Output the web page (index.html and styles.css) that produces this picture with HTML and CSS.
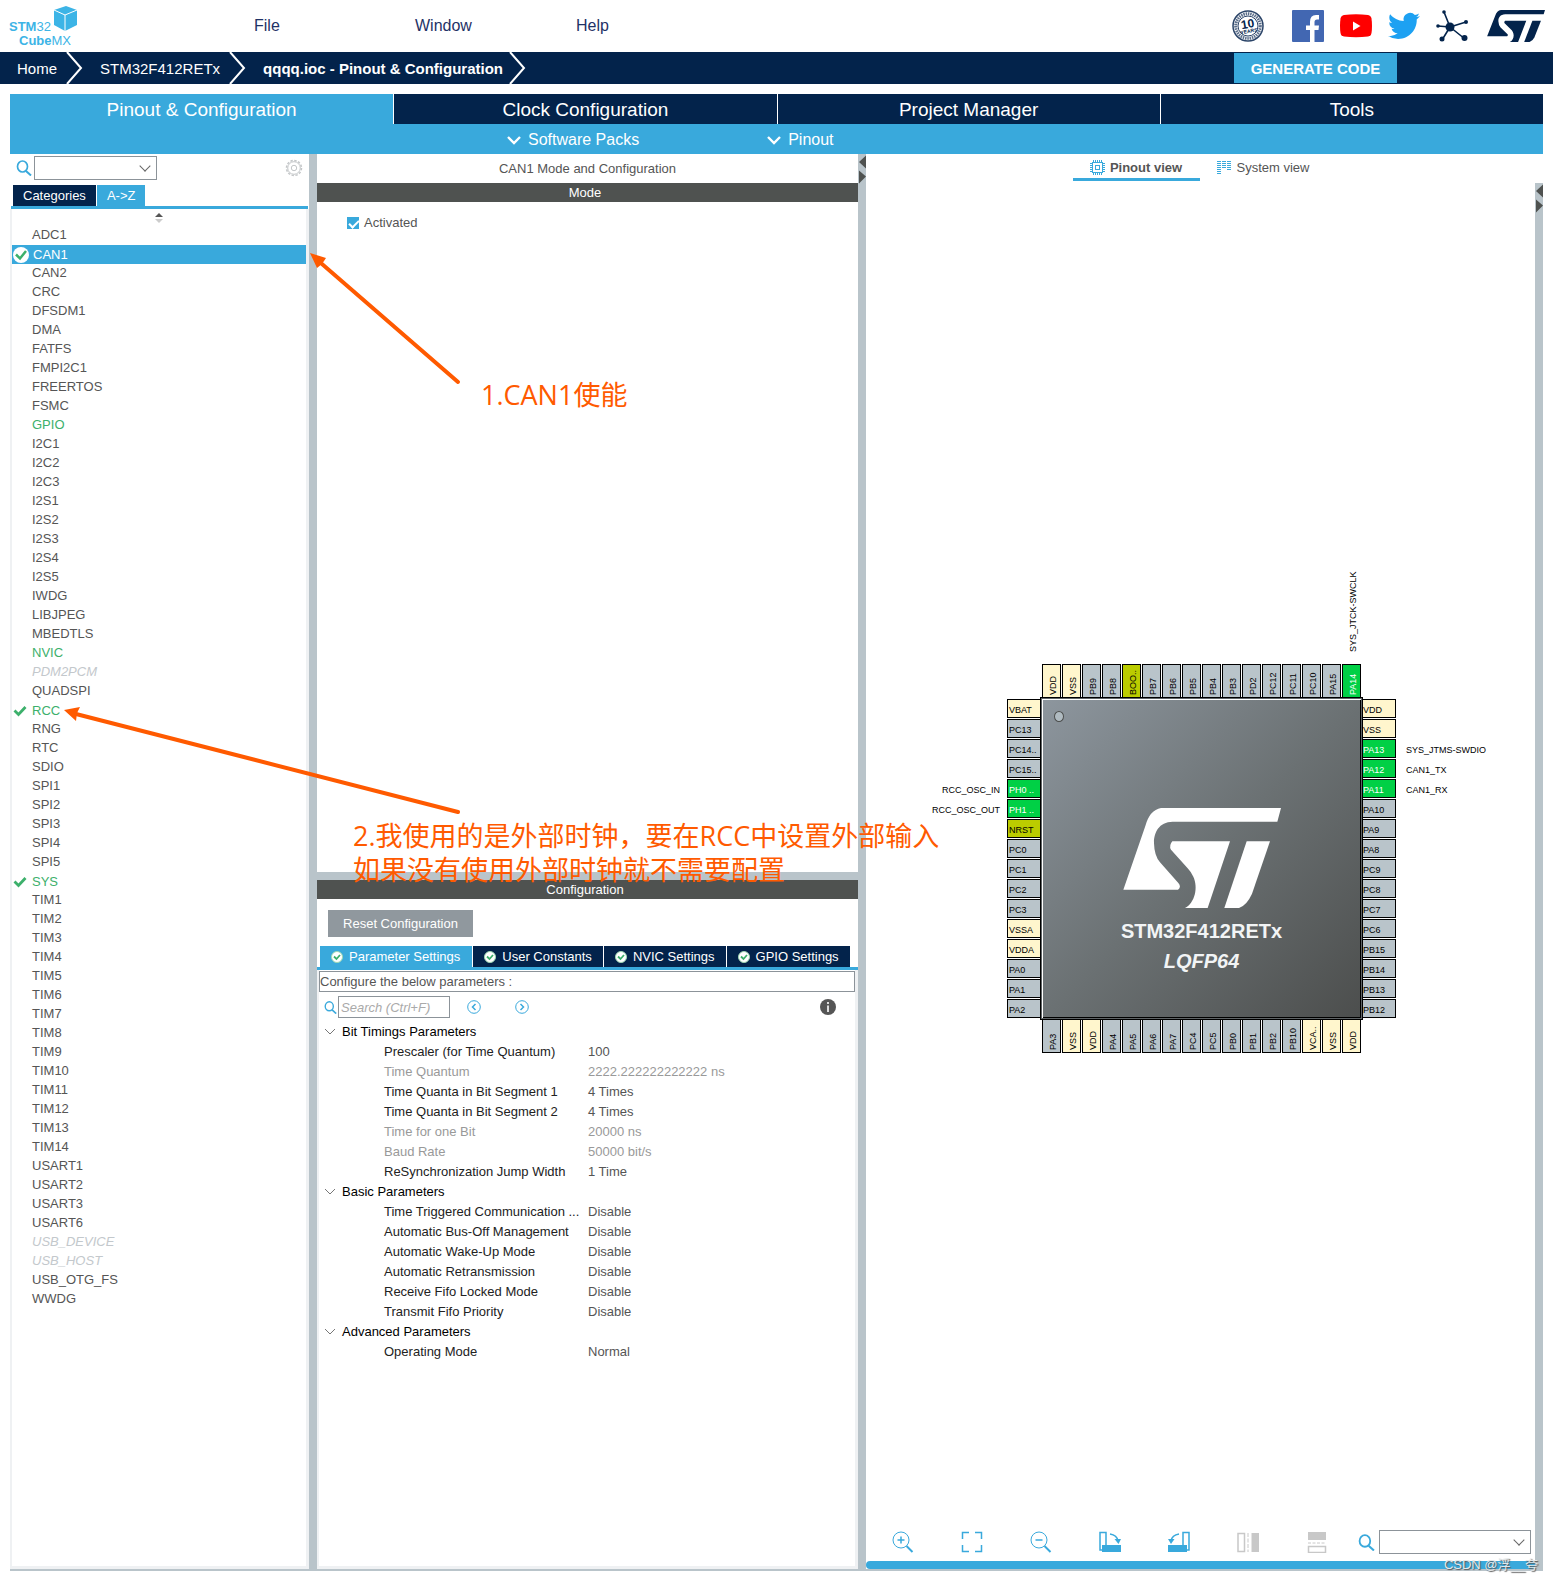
FILE: index.html
```html
<!DOCTYPE html>
<html lang="en">
<head>
    <meta charset="UTF-8">
    <title>STM32CubeMX</title>
    <link rel="stylesheet" href="styles.css">
</head>
<body>
<!-- shared icons -->
<svg class="sprite" aria-hidden="true">
    <symbol id="st" viewBox="636 84 474 300" preserveAspectRatio="none">
        <path d="M637 329 703 138Q716 90 750 84H1110L1099 125H785C742 126 728 160 729 190Q730 228 747 247L802 309Q812 321 801 329Z"/>
        <path d="M784 184H957L890 384H822C852 368 862 322 847 290Q842 278 830 265L780 209Q773 197 784 184Z"/>
        <path d="M1007 184H1077L1023 341Q1008 375 984 384H940Z"/>
    </symbol>
    <symbol id="search" viewBox="0 0 16 16">
        <ellipse cx="6.500" cy="6.500" rx="5" ry="5.500" fill="none" stroke="currentColor" stroke-width="1.700"/>
        <path d="M10 11 15 15.500" stroke="currentColor" stroke-width="2"/>
    </symbol>
    <symbol id="check" viewBox="0 0 14 12">
        <path d="M1.500 5.500 5.500 9.500 12.500 2" fill="none" stroke="#3cb06b" stroke-width="2.800"/>
    </symbol>
    <symbol id="ok" viewBox="0 0 12 12">
        <circle cx="6" cy="6" r="5.500" fill="#fff" stroke="#9ed8b2"/>
        <path d="M3 5.500 5.500 8 9 4" fill="none" stroke="#3cb06b" stroke-width="1.800"/>
    </symbol>
    <symbol id="down" viewBox="0 0 14 10">
        <path d="M1 2 7 8 13 2" fill="none" stroke="currentColor" stroke-width="2.400"/>
    </symbol>
    <symbol id="twisty" viewBox="0 0 12 8">
        <path d="M1 1 6 6 11 1" fill="none" stroke="#777"/>
    </symbol>
    <symbol id="crumb" viewBox="0 0 17 32">
        <path d="M1 0 15 16 1 32" fill="none" stroke="#fff" stroke-width="2"/>
    </symbol>
    <symbol id="handle" viewBox="0 0 8 29">
        <path d="M8 1V14L1 7.500ZM1 16V29L8 22Z" fill="#4f5250"/>
    </symbol>
</svg>

<header class="header">
    <svg class="logo" viewBox="0 0 72 44">
        <text x="0" y="27" class="logo-text"><tspan font-weight="bold">STM</tspan>32</text>
        <text x="10" y="41" class="logo-text"><tspan font-weight="bold">Cube</tspan>MX</text>
        <path d="M45 6 57 2 68 6V21L56 27 45 21Z" fill="#3cb4e6"/>
        <path d="M45 6 56 11 68 6M56 11V27" fill="none" stroke="#fff"/>
    </svg>
    <nav class="menu">
        <button>File</button>
        <button>Window</button>
        <button>Help</button>
    </nav>
    <div class="links">
        <a href="#" class="badge" aria-label="10 years commitment">
            <svg width="32" height="32" viewBox="0 0 32 32">
                <circle cx="16" cy="16" r="15" fill="#fff" stroke="#2b4468" stroke-width="1.500"/>
                <circle cx="16" cy="16" r="12.300" fill="none" stroke="#5b6e8a" stroke-width="3" stroke-dasharray="1.500 .8"/>
                <circle cx="16" cy="16" r="10" fill="#fff" stroke="#2b4468"/>
                <g fill="#03234b" font-weight="bold" text-anchor="middle" transform="rotate(-10 16 16)">
                    <text x="16" y="18" font-size="12">10</text>
                    <text x="16" y="23" font-size="5">YEARS</text>
                </g>
            </svg>
        </a>
        <a href="#" aria-label="Facebook">
            <svg width="32" height="32" viewBox="0 0 32 32">
                <rect width="32" height="32" rx="1" fill="#4267b2"/>
                <path d="M22 32V20H18V15.500H22V12Q22 5 28 5H31V9.500H29Q26.500 9.500 26.500 12V15.500H31L30.500 20H26.500V32Z" fill="#fff" transform="translate(-4 0)"/>
            </svg>
        </a>
        <a href="#" aria-label="YouTube">
            <svg width="32" height="32" viewBox="0 0 32 32">
                <path d="M4 5Q16 3.500 28 5 31 5.500 31.500 8.500 32.500 16 31.500 23 31 26 28 26.500 16 28 4 26.500 1 26 .5 23-.5 16 .5 8.500 1 5.500 4 5Z" fill="#f00"/>
                <path d="M13 11.500V20.500L20.500 16Z" fill="#fff"/>
            </svg>
        </a>
        <a href="#" aria-label="Twitter">
            <svg width="32" height="32" viewBox="0 0 24 24">
                <path fill="#1da1f2" d="M23.950 4.570a10 10 0 0 1-2.820.770 4.960 4.960 0 0 0 2.160-2.720c-.95.550-2 .950-3.130 1.180a4.920 4.920 0 0 0-8.380 4.480C7.690 8.090 4.070 6.130 1.640 3.160a4.820 4.820 0 0 0-.67 2.480c0 1.710.87 3.210 2.190 4.100a4.900 4.900 0 0 1-2.230-.62v.060a4.920 4.920 0 0 0 3.950 4.830 5 5 0 0 1-2.210.080 4.940 4.940 0 0 0 4.600 3.420A9.870 9.870 0 0 1 0 19.540a13.990 13.990 0 0 0 7.550 2.210c9.050 0 14-7.500 14-13.980 0-.21 0-.42-.02-.63a9.940 9.940 0 0 0 2.460-2.550z"/>
            </svg>
        </a>
        <a href="#" aria-label="Community">
            <svg width="32" height="32" viewBox="0 0 32 32" fill="#03234b">
                <path d="M14 17 8 2M14 17 2 16M14 17 30 12M14 17 6 30M14 17 29 29" stroke="#03234b" stroke-width="1.600"/>
                <circle cx="14" cy="17" r="4.500"/><circle cx="8" cy="2" r="1.800"/><circle cx="2" cy="16" r="1.800"/>
                <circle cx="30" cy="12" r="2"/><circle cx="6" cy="29" r="2.500"/><circle cx="28.500" cy="28" r="3"/>
            </svg>
        </a>
        <a href="#" aria-label="ST"><svg class="st-link"><use href="#st"/></svg></a>
    </div>
</header>

<nav class="breadcrumb">
    <a href="#">Home</a><svg class="crumb"><use href="#crumb"/></svg>
    <a href="#">STM32F412RETx</a><svg class="crumb"><use href="#crumb"/></svg>
    <a href="#" class="current">qqqq.ioc - Pinout &amp; Configuration</a><svg class="crumb"><use href="#crumb"/></svg>
    <button class="generate">GENERATE CODE</button>
</nav>

<main class="main">
    <nav class="tabs">
        <button class="active">Pinout &amp; Configuration</button>
        <button>Clock Configuration</button>
        <button>Project Manager</button>
        <button>Tools</button>
    </nav>
    <div class="submenu">
        <button><svg width="14" height="10"><use href="#down"/></svg>Software Packs</button>
        <button><svg width="14" height="10"><use href="#down"/></svg>Pinout</button>
    </div>

    <div class="workspace">
        <aside class="sidebar">
            <div class="filter">
                <svg width="16" height="16"><use href="#search"/></svg>
                <div class="combo"><select aria-label="Search peripheral"><option></option></select></div>
                <button class="gear" aria-label="Settings">
                    <svg width="18" height="18" viewBox="0 0 18 18" fill="none" stroke="#c3c6c8">
                        <circle cx="9" cy="9" r="7.500" stroke-width="1.500" stroke-dasharray="2.400 1.530"/>
                        <circle cx="9" cy="9" r="6.300"/><circle cx="9" cy="9" r="2.700"/>
                    </svg>
                </button>
            </div>
            <div class="side-tabs">
                <button>Categories</button>
                <button class="active">A-&gt;Z</button>
            </div>
            <div class="list-box">
                <button class="sort" aria-label="Sort">
                    <svg width="10" height="12" viewBox="0 0 10 12"><path d="M1 5 5 1 9 5Z" fill="#555"/><path d="M1 7 5 11 9 7Z" fill="#ccc"/></svg>
                </button>
                <ul class="peripherals">
                    <li>ADC1</li>
                    <li class="marked selected"><svg width="21" height="18" viewBox="0 0 21 18"><circle cx="9" cy="9" r="8" fill="#fff"/><path d="M4 8.500 8 12.500 14 5" fill="none" stroke="#3cb06b" stroke-width="2.500"/></svg>CAN1</li>
                    <li>CAN2</li>
                    <li>CRC</li>
                    <li>DFSDM1</li>
                    <li>DMA</li>
                    <li>FATFS</li>
                    <li>FMPI2C1</li>
                    <li>FREERTOS</li>
                    <li>FSMC</li>
                    <li class="used">GPIO</li>
                    <li>I2C1</li>
                    <li>I2C2</li>
                    <li>I2C3</li>
                    <li>I2S1</li>
                    <li>I2S2</li>
                    <li>I2S3</li>
                    <li>I2S4</li>
                    <li>I2S5</li>
                    <li>IWDG</li>
                    <li>LIBJPEG</li>
                    <li>MBEDTLS</li>
                    <li class="used">NVIC</li>
                    <li class="disabled">PDM2PCM</li>
                    <li>QUADSPI</li>
                    <li class="marked used"><svg class="tick"><use href="#check"/></svg>RCC</li>
                    <li>RNG</li>
                    <li>RTC</li>
                    <li>SDIO</li>
                    <li>SPI1</li>
                    <li>SPI2</li>
                    <li>SPI3</li>
                    <li>SPI4</li>
                    <li>SPI5</li>
                    <li class="marked used"><svg class="tick"><use href="#check"/></svg>SYS</li>
                    <li>TIM1</li>
                    <li>TIM2</li>
                    <li>TIM3</li>
                    <li>TIM4</li>
                    <li>TIM5</li>
                    <li>TIM6</li>
                    <li>TIM7</li>
                    <li>TIM8</li>
                    <li>TIM9</li>
                    <li>TIM10</li>
                    <li>TIM11</li>
                    <li>TIM12</li>
                    <li>TIM13</li>
                    <li>TIM14</li>
                    <li>USART1</li>
                    <li>USART2</li>
                    <li>USART3</li>
                    <li>USART6</li>
                    <li class="disabled">USB_DEVICE</li>
                    <li class="disabled">USB_HOST</li>
                    <li>USB_OTG_FS</li>
                    <li>WWDG</li>
                </ul>
            </div>
        </aside>

        <div class="splitter"></div>

        <section class="center">
            <div class="mode">
                <div class="panel-title">CAN1 Mode and Configuration</div>
                <div class="bar">Mode</div>
                <label class="activated"><input type="checkbox" checked>Activated</label>
            </div>
            <div class="splitter"></div>
            <div class="config">
                <div class="bar">Configuration</div>
                <button class="reset">Reset Configuration</button>
                <div class="config-tabs">
                    <button class="active"><svg width="12" height="12"><use href="#ok"/></svg>Parameter Settings</button>
                    <button><svg width="12" height="12"><use href="#ok"/></svg>User Constants</button>
                    <button><svg width="12" height="12"><use href="#ok"/></svg>NVIC Settings</button>
                    <button><svg width="12" height="12"><use href="#ok"/></svg>GPIO Settings</button>
                </div>
                <div class="config-body">
                    <div class="hint">Configure the below parameters :</div>
                    <div class="param-search">
                        <svg width="13" height="13"><use href="#search"/></svg>
                        <input type="text" placeholder="Search (Ctrl+F)" aria-label="Search parameters">
                        <button aria-label="Previous"><svg width="14" height="14" viewBox="0 0 14 14" fill="none" stroke="#39a9dc"><circle cx="7" cy="7" r="6.300"/><path d="M8.500 4 5.500 7 8.500 10" stroke-width="1.500"/></svg></button>
                        <button aria-label="Next"><svg width="14" height="14" viewBox="0 0 14 14" fill="none" stroke="#39a9dc"><circle cx="7" cy="7" r="6.300"/><path d="M5.500 4 8.500 7 5.500 10" stroke-width="1.500"/></svg></button>
                        <button class="info" aria-label="Info"><svg width="16" height="16" viewBox="0 0 16 16"><circle cx="8" cy="8" r="8" fill="#555"/><path d="M8 6.500V13M8 3V5" stroke="#fff" stroke-width="1.600"/></svg></button>
                    </div>
                    <table class="params">
                        <tbody>
                            <tr class="group"><th colspan="2"><svg width="12" height="8"><use href="#twisty"/></svg>Bit Timings Parameters</th></tr>
                            <tr><td>Prescaler (for Time Quantum)</td><td>100</td></tr>
                            <tr class="readonly"><td>Time Quantum</td><td>2222.222222222222 ns</td></tr>
                            <tr><td>Time Quanta in Bit Segment 1</td><td>4 Times</td></tr>
                            <tr><td>Time Quanta in Bit Segment 2</td><td>4 Times</td></tr>
                            <tr class="readonly"><td>Time for one Bit</td><td>20000 ns</td></tr>
                            <tr class="readonly"><td>Baud Rate</td><td>50000 bit/s</td></tr>
                            <tr><td>ReSynchronization Jump Width</td><td>1 Time</td></tr>
                        </tbody>
                        <tbody>
                            <tr class="group"><th colspan="2"><svg width="12" height="8"><use href="#twisty"/></svg>Basic Parameters</th></tr>
                            <tr><td>Time Triggered Communication ...</td><td>Disable</td></tr>
                            <tr><td>Automatic Bus-Off Management</td><td>Disable</td></tr>
                            <tr><td>Automatic Wake-Up Mode</td><td>Disable</td></tr>
                            <tr><td>Automatic Retransmission</td><td>Disable</td></tr>
                            <tr><td>Receive Fifo Locked Mode</td><td>Disable</td></tr>
                            <tr><td>Transmit Fifo Priority</td><td>Disable</td></tr>
                        </tbody>
                        <tbody>
                            <tr class="group"><th colspan="2"><svg width="12" height="8"><use href="#twisty"/></svg>Advanced Parameters</th></tr>
                            <tr><td>Operating Mode</td><td>Normal</td></tr>
                        </tbody>
                    </table>
                </div>
            </div>
        </section>

        <div class="splitter"><svg width="8" height="30"><use href="#handle"/></svg></div>

        <section class="view">
            <div class="view-tabs">
                <button class="active">
                    <svg width="15" height="15" viewBox="0 0 15 15" fill="none" stroke="#39a9dc">
                        <rect x="2.500" y="2.500" width="10" height="10"/><rect x="5.500" y="5.500" width="4" height="4"/>
                        <path d="M3.500 0V2M5.500 0V2M7.500 0V2M9.500 0V2M11.500 0V2M3.500 13V15M5.500 13V15M7.500 13V15M9.500 13V15M11.500 13V15M0 3.500H2M0 5.500H2M0 7.500H2M0 9.500H2M0 11.500H2M13 3.500H15M13 5.500H15M13 7.500H15M13 9.500H15M13 11.500H15"/>
                    </svg>Pinout view
                </button>
                <button>
                    <svg width="15" height="15" viewBox="0 0 15 15" stroke="#39a9dc">
                        <path d="M0 1.500H4M0 3.500H4M0 5.500H4M0 7.500H4M0 9.500H4M0 11.500H4M0 13.500H4M5 1.500H9M5 3.500H9M5 5.500H9M5 7.500H9M10 1.500H14M10 3.500H14M10 5.500H14M10 7.500H14M10 9.500H14"/>
                    </svg>System view
                </button>
            </div>
            <div class="view-body">
                <div class="view-main">
                    <div class="canvas">
                        <div class="package">
                            <div class="pins top">
                                <span class="pin power">VDD</span><span class="pin power">VSS</span><span class="pin">PB9</span><span class="pin">PB8</span>
                                <span class="pin boot">BOO..</span><span class="pin">PB7</span><span class="pin">PB6</span><span class="pin">PB5</span>
                                <span class="pin">PB4</span><span class="pin">PB3</span><span class="pin">PD2</span><span class="pin">PC12</span>
                                <span class="pin">PC11</span><span class="pin">PC10</span><span class="pin">PA15</span><span class="pin on">PA14<em>SYS_JTCK-SWCLK</em></span>
                            </div>
                            <div class="pins left">
                                <span class="pin power">VBAT</span><span class="pin">PC13</span><span class="pin">PC14..</span><span class="pin">PC15..</span>
                                <span class="pin on">PH0 ..<em>RCC_OSC_IN</em></span><span class="pin on">PH1 ..<em>RCC_OSC_OUT</em></span><span class="pin boot">NRST</span><span class="pin">PC0</span>
                                <span class="pin">PC1</span><span class="pin">PC2</span><span class="pin">PC3</span><span class="pin power">VSSA</span>
                                <span class="pin power">VDDA</span><span class="pin">PA0</span><span class="pin">PA1</span><span class="pin">PA2</span>
                            </div>
                            <div class="chip">
                                <i class="dot"></i>
                                <svg class="chip-logo"><use href="#st"/></svg>
                                <strong>STM32F412RETx</strong>
                                <strong class="pkg">LQFP64</strong>
                            </div>
                            <div class="pins right">
                                <span class="pin power">VDD</span><span class="pin power">VSS</span><span class="pin on">PA13<em>SYS_JTMS-SWDIO</em></span><span class="pin on">PA12<em>CAN1_TX</em></span>
                                <span class="pin on">PA11<em>CAN1_RX</em></span><span class="pin">PA10</span><span class="pin">PA9</span><span class="pin">PA8</span>
                                <span class="pin">PC9</span><span class="pin">PC8</span><span class="pin">PC7</span><span class="pin">PC6</span>
                                <span class="pin">PB15</span><span class="pin">PB14</span><span class="pin">PB13</span><span class="pin">PB12</span>
                            </div>
                            <div class="pins bottom">
                                <span class="pin">PA3</span><span class="pin power">VSS</span><span class="pin power">VDD</span><span class="pin">PA4</span>
                                <span class="pin">PA5</span><span class="pin">PA6</span><span class="pin">PA7</span><span class="pin">PC4</span>
                                <span class="pin">PC5</span><span class="pin">PB0</span><span class="pin">PB1</span><span class="pin">PB2</span>
                                <span class="pin">PB10</span><span class="pin power">VCA..</span><span class="pin power">VSS</span><span class="pin power">VDD</span>
                            </div>
                        </div>
                    </div>
                    <div class="toolbar">
                        <button aria-label="Zoom in"><svg viewBox="0 0 22 22"><circle cx="9" cy="9" r="8"/><path d="M14.500 15 20.500 21" stroke-width="2"/><path d="M5.500 9H12.500M9 5.500V12.500" stroke-width="1.500"/></svg></button>
                        <button aria-label="Fit"><svg viewBox="0 0 22 22"><path d="M1.500 8V1.500H8M14 1.500H20.500V8M20.500 14V20.500H14M8 20.500H1.500V14" stroke-width="1.500"/></svg></button>
                        <button aria-label="Zoom out"><svg viewBox="0 0 22 22"><circle cx="9" cy="9" r="8"/><path d="M14.500 15 20.500 21" stroke-width="2"/><path d="M5.500 9H12.500" stroke-width="1.500"/></svg></button>
                        <button aria-label="Rotate right"><svg viewBox="0 0 22 22"><path d="M3 19H1V1.500H7V14" stroke-width="1.500"/><path d="M3 14H22V21H3Z" fill="#39a9dc" stroke="none"/><path d="M11 3Q18 4 19 10" stroke-width="1.500"/><path d="M15.500 8H22L19.500 13Z" fill="#39a9dc" stroke="none"/></svg></button>
                        <button aria-label="Rotate left"><svg viewBox="0 0 22 22"><path d="M19 19H21V1.500H15V14" stroke-width="1.500"/><path d="M0 14H19V21H0Z" fill="#39a9dc" stroke="none"/><path d="M11 3Q4 4 3 10" stroke-width="1.500"/><path d="M0 8H6.500L3 13Z" fill="#39a9dc" stroke="none"/></svg></button>
                        <button class="off" aria-label="Flip horizontally" disabled><svg viewBox="0 0 22 22"><path d="M1 2.500H7.500V20.500H1Z" stroke-width="1.500"/><path d="M11 2V21" stroke-dasharray="4 1.500"/><path d="M14.500 2H22V21H14.500Z" fill="#c8c8c8" stroke="none"/></svg></button>
                        <button class="off" aria-label="Flip vertically" disabled><svg viewBox="0 0 22 22"><path d="M2 1H20V9H2Z" fill="#c8c8c8" stroke="none"/><path d="M2 12H20" stroke-dasharray="3 1.500"/><path d="M2.500 15.500H19.500V21.500H2.500Z" stroke-width="1.500"/></svg></button>
                        <svg class="find" width="17" height="17"><use href="#search"/></svg>
                        <div class="combo"><select aria-label="Search pin"><option></option></select></div>
                    </div>
                    <div class="scroll"></div>
                </div>
                <div class="splitter"><svg width="8" height="30"><use href="#handle"/></svg></div>
            </div>
        </section>
    </div>
</main>

<!-- notes drawn over the window -->
<svg class="arrows" width="470" height="830">
    <g stroke="#ff5a00" fill="#ff5a00" stroke-linecap="round">
        <path d="M458 382 322 264" stroke-width="4"/>
        <path d="M310 253 326 258 322 264 317 268Z" stroke="none"/>
        <path d="M458 812 76 714" stroke-width="4"/>
        <path d="M64 710 80 707 77 713 76 721Z" stroke="none"/>
    </g>
</svg>
<p class="note first">1.CAN1使能</p>
<p class="note second">2.我使用的是外部时钟，要在RCC中设置外部输入<br>如果没有使用外部时钟就不需要配置</p>
<div class="watermark">CSDN @浮__夸</div>
</body>
</html>
```
FILE: styles.css
```css
* {
    box-sizing: border-box;
}
body {
    font-family: "Liberation Sans", Arial, sans-serif;
    font-size: 13px;
    color: #555;
    margin: 0;
    background-color: #fff;
    position: relative;
    display: flex;
    flex-direction: column;
    min-height: 100vh;
}
button {
    font: inherit;
    color: inherit;
    background: none;
    border: none;
    padding: 0;
}
a {
    color: inherit;
    text-decoration: none;
}
svg {
    display: block;
    flex: none;
}
.sprite {
    position: absolute;
    width: 0;
    height: 0;
}

/* header */
.header {
    height: 52px;
    display: flex;
    align-items: center;
    padding: 0 8px 0 9px;
}
.logo {
    width: 72px;
    height: 44px;
}
.logo-text {
    font-size: 13px;
    fill: #3cb4e6;
}
.menu {
    display: flex;
    gap: 103px;
    padding-left: 173px;
    font-size: 16px;
    color: #1f3266;
}
.menu button {
    min-width: 58px;
    text-align: left;
}
.links {
    display: flex;
    align-items: center;
    gap: 16px;
    margin-left: auto;
}
.badge {
    margin-right: 12px;
}
.st-link {
    width: 58px;
    height: 32px;
    margin-left: 3px;
    fill: #03234b;
}
.breadcrumb {
    height: 32px;
    display: flex;
    align-items: center;
    background-color: #03234b;
    color: #fff;
    font-size: 15px;
}
.breadcrumb a {
    padding: 0 9px 0 17px;
}
.breadcrumb .current {
    padding-right: 6px;
    font-weight: bold;
}
.crumb {
    width: 17px;
    height: 32px;
}
.generate {
    width: 163px;
    height: 30px;
    margin-left: auto;
    margin-right: 156px;
    background-color: #39a9dc;
    font-weight: bold;
}

/* main tabs */
.main {
    flex: 1;
    display: flex;
    flex-direction: column;
    padding: 10px;
}
.tabs {
    display: grid;
    grid-template-columns: repeat(4, 1fr);
    height: 30px;
    color: #fff;
    font-size: 19px;
}
.tabs button {
    padding-top: 2px;
    background-color: #03234b;
    border-left: 1px solid #fff;
}
.tabs .active {
    background-color: #39a9dc;
    border-left: none;
}
.submenu {
    display: flex;
    gap: 128px;
    height: 30px;
    padding: 2px 0 0 497px;
    background-color: #39a9dc;
    color: #fff;
    font-size: 16px;
}
.submenu button {
    display: flex;
    align-items: center;
    gap: 7px;
}
.workspace {
    flex: 1;
    display: grid;
    grid-template-columns: 299px 8px 541fr 8px 677fr;
    border-bottom: 2px solid #b9c4ca;
}
.splitter {
    background-color: #b9c4ca;
}

/* sidebar */
.sidebar {
    display: flex;
    flex-direction: column;
}
.filter {
    display: flex;
    align-items: center;
    padding: 2px 6px 0;
    color: #39a9dc;
}
.combo {
    position: relative;
    width: 123px;
    margin-left: 2px;
}
.combo select {
    display: block;
    appearance: none;
    width: 100%;
    height: 24px;
    border: 1px solid #8c9399;
    border-radius: 0;
    background-color: #fff;
}
.combo::after {
    content: "";
    position: absolute;
    right: 8px;
    top: 6px;
    width: 7px;
    height: 7px;
    border: solid #666;
    border-width: 0 1px 1px 0;
    transform: rotate(45deg);
}
.gear {
    margin-left: auto;
}
.side-tabs {
    display: flex;
    gap: 1px;
    margin: 5px 1px 0;
    padding: 0 2px;
    border-bottom: 3px solid #39a9dc;
    color: #fff;
}
.side-tabs button {
    height: 21px;
    padding: 0 10px;
    background-color: #03234b;
}
.side-tabs .active {
    background-color: #39a9dc;
}
.list-box {
    flex: 1;
    border: solid #eff1f3;
    border-width: 0 3px 3px 2px;
}
.sort {
    display: block;
    margin: 3px auto 2px;
}
.peripherals {
    list-style: none;
    margin: 0;
    padding: 0;
}
.peripherals li {
    height: 19px;
    line-height: 18px;
    padding-left: 20px;
}
.peripherals .marked {
    display: flex;
    align-items: center;
    padding-left: 0;
}
.tick {
    width: 14px;
    height: 12px;
    margin: 0 5px 0 1px;
}
.peripherals .selected {
    background-color: #39a9dc;
    color: #fff;
}
.peripherals .used {
    color: #3cb06b;
}
.peripherals .disabled {
    color: #c3c8cc;
    font-style: italic;
}

/* mode and configuration */
.center {
    display: grid;
    grid-template-rows: 718fr 8px 689fr;
}
.panel-title {
    height: 29px;
    line-height: 29px;
    text-align: center;
}
.bar {
    height: 19px;
    line-height: 19px;
    padding-right: 5px;
    background-color: #4f5250;
    color: #fff;
    text-align: center;
}
.activated {
    display: flex;
    align-items: center;
    gap: 5px;
    width: fit-content;
    margin: 13px 30px;
}
.activated input {
    appearance: none;
    position: relative;
    width: 12px;
    height: 12px;
    margin: 0;
    background-color: #39a9dc;
}
.activated input:checked::after {
    content: "";
    position: absolute;
    left: 4px;
    top: 1px;
    width: 4px;
    height: 8px;
    border: solid #fff;
    border-width: 0 2px 2px 0;
    transform: rotate(45deg);
}
.config {
    display: flex;
    flex-direction: column;
}
.reset {
    width: 145px;
    height: 27px;
    margin: 11px 11px 9px;
    background-color: #90989e;
    color: #fff;
}
.config-tabs {
    display: flex;
    gap: 1px;
    padding: 0 3px;
    border-bottom: 3px solid #39a9dc;
    color: #fff;
}
.config-tabs button {
    display: flex;
    align-items: center;
    gap: 6px;
    height: 21px;
    padding: 0 11px;
    background-color: #03234b;
}
.config-tabs .active {
    padding-right: 12px;
    background-color: #39a9dc;
}
.config-body {
    flex: 1;
    padding-top: 1px;
    border: solid #eff1f3;
    border-width: 0 3px 3px 2px;
}
.hint {
    height: 21px;
    line-height: 19px;
    border: 1px solid #8c9399;
}
.param-search {
    display: flex;
    align-items: center;
    padding: 4px 19px 3px 5px;
    color: #39a9dc;
}
.param-search input {
    width: 112px;
    height: 22px;
    margin: 0 17px 0 1px;
    padding: 0 2px;
    border: 1px solid #8c9399;
    font: inherit;
}
.param-search input::placeholder {
    color: #aaa;
    font-style: italic;
}
.param-search button {
    margin-right: 34px;
}
.param-search .info {
    margin: 0 0 0 auto;
}
.params {
    width: 100%;
    table-layout: fixed;
    border-collapse: collapse;
}
.params th,
.params td {
    height: 20px;
    padding: 0 0 0 1px;
    text-align: left;
    font-weight: normal;
}
.params td:first-child {
    width: 269px;
    padding-left: 65px;
    color: #222;
    white-space: nowrap;
}
.params th {
    padding-left: 5px;
    color: #000;
}
.params th svg {
    display: inline-block;
    margin-right: 6px;
}
.params .readonly td {
    color: #999;
}

/* pinout view */
.view {
    display: flex;
    flex-direction: column;
}
.view-tabs {
    display: flex;
    justify-content: center;
    height: 29px;
    padding: 0 10px 2px 0;
}
.view-tabs button {
    display: flex;
    align-items: center;
    justify-content: center;
    gap: 5px;
    width: 127px;
    padding-top: 2px;
    border-bottom: 3px solid transparent;
}
.view-tabs .active {
    border-color: #39a9dc;
    font-weight: bold;
}
.view-body {
    flex: 1;
    display: flex;
}
.view-main {
    flex: 1;
    display: flex;
    flex-direction: column;
}
.view-body .splitter {
    width: 8px;
}
.canvas {
    flex: 1;
    display: flex;
    align-items: center;
    justify-content: center;
    padding: 8px 0 0 2px;
}
.package {
    display: grid;
    grid-template-columns: 33px 323px 33px;
    grid-template-rows: 33px 323px 33px;
    font-size: 9px;
}
.pins {
    display: flex;
    gap: 1px;
}
.left,
.right {
    flex-direction: column;
    padding: 2px 0;
}
.top,
.bottom {
    grid-column: 2;
    padding: 0 2px;
}
.left {
    grid-column: 1;
}
.pin {
    position: relative;
    height: 19px;
    line-height: 21px;
    border: 1px solid #000;
    background-color: #b9c4ca;
    color: #000;
    white-space: nowrap;
}
.left .pin {
    padding-left: 1px;
    border-right: none;
}
.right .pin {
    border-left: none;
}
.top .pin,
.bottom .pin {
    width: 19px;
    height: 33px;
    padding-top: 2px;
    writing-mode: vertical-rl;
    transform: rotate(180deg);
}
.top .pin {
    border-top: none;
}
.bottom .pin {
    border-bottom: none;
}
.pin.power {
    background-color: #fff6cd;
}
.pin.boot {
    background-color: #bbcc00;
}
.pin.on {
    background-color: #00d045;
    color: #fff;
}
.pin em {
    position: absolute;
    top: 0;
    font-style: normal;
    color: #000;
}
.left em {
    right: 40px;
}
.right em {
    left: 43px;
}
.top em {
    top: 45px;
    right: 0;
}
.chip {
    display: flex;
    flex-direction: column;
    align-items: center;
    padding: 12px 12px 0;
    border: 2px solid #5f6466;
    outline: 1px solid #000;
    outline-offset: -1px;
    background: linear-gradient(135deg, #8d969e, #6b7173 50%, #4c4e4d);
    box-shadow: inset 1px 1px #fff, inset -1px -1px #000;
    color: #f2f4f5;
    font-size: 20px;
    line-height: 30px;
}
.dot {
    align-self: flex-start;
    width: 10px;
    height: 11px;
    border: 1px solid #4c4e4d;
    border-radius: 50%;
    background-color: #b0bbc1;
}
.chip-logo {
    width: 158px;
    height: 100px;
    margin: 86px 0 8px;
    fill: #fff;
}
.pkg {
    font-style: italic;
}
.toolbar {
    display: flex;
    align-items: center;
    gap: 47px;
    height: 36px;
    padding: 0 4px 2px 26px;
}
.toolbar button svg {
    width: 22px;
    height: 22px;
    fill: none;
    stroke: #39a9dc;
}
.toolbar .off svg {
    stroke: #c8c8c8;
}
.find {
    margin: 0 -45px 0 -17px;
    color: #39a9dc;
}
.toolbar .combo {
    flex: 1;
}
.scroll {
    height: 8px;
    border-radius: 4px;
    background-color: #39a9dc;
}

/* notes */
.arrows {
    position: absolute;
    left: 0;
    top: 0;
}
.note {
    position: absolute;
    margin: 0;
    color: #ff5a00;
    font-family: "Open Sans", "Noto Sans CJK SC", sans-serif;
    font-size: 27px;
    line-height: 34px;
    white-space: nowrap;
}
.first {
    left: 481px;
    top: 378px;
}
.second {
    left: 353px;
    top: 819px;
}
.watermark {
    position: absolute;
    right: 15px;
    bottom: 8px;
    color: #e4e8ea;
    font-family: "Liberation Sans", "Noto Sans CJK SC", sans-serif;
    text-shadow: 1px 1px 1px #555;
}
```
